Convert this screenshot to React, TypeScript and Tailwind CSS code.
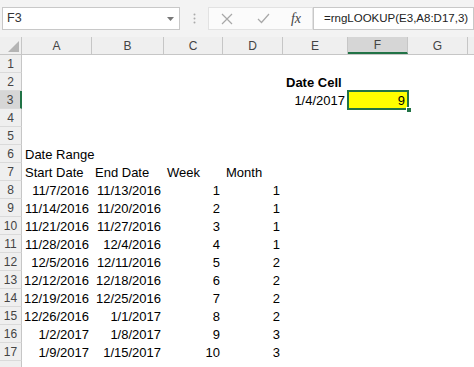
import React from "react";

type Cell = { t: string; a?: "l" | "r"; b?: boolean };

const COLS = [
  { k: "A", w: "w-[70px]" },
  { k: "B", w: "w-[72px]" },
  { k: "C", w: "w-[59px]" },
  { k: "D", w: "w-[60px]" },
  { k: "E", w: "w-[65px]" },
  { k: "F", w: "w-[60px]" },
  { k: "G", w: "w-[60px]" },
];

const data: Record<number, Record<string, Cell>> = {
  2: { E: { t: "Date Cell", a: "l", b: true } },
  3: { E: { t: "1/4/2017", a: "r" }, F: { t: "9", a: "r" } },
  6: { A: { t: "Date Range", a: "l" } },
  7: {
    A: { t: "Start Date", a: "l" },
    B: { t: "End Date", a: "l" },
    C: { t: "Week", a: "l" },
    D: { t: "Month", a: "l" },
  },
};

const rowsData: [string, string, string, string][] = [
  ["11/7/2016", "11/13/2016", "1", "1"],
  ["11/14/2016", "11/20/2016", "2", "1"],
  ["11/21/2016", "11/27/2016", "3", "1"],
  ["11/28/2016", "12/4/2016", "4", "1"],
  ["12/5/2016", "12/11/2016", "5", "2"],
  ["12/12/2016", "12/18/2016", "6", "2"],
  ["12/19/2016", "12/25/2016", "7", "2"],
  ["12/26/2016", "1/1/2017", "8", "2"],
  ["1/2/2017", "1/8/2017", "9", "3"],
  ["1/9/2017", "1/15/2017", "10", "3"],
];
rowsData.forEach((r, i) => {
  data[8 + i] = {
    A: { t: r[0], a: "r" },
    B: { t: r[1], a: "r" },
    C: { t: r[2], a: "r" },
    D: { t: r[3], a: "r" },
  };
});

function Row({ n }: { n: number }) {
  const sel = n === 3;
  return (
    <div className="flex h-[18px] shrink-0">
      <div
        className={
          "w-[22px] shrink-0 h-[18px] flex items-center justify-center text-[12px] text-[#444] border-b border-[#dadada] " +
          (sel
            ? "bg-[#d6d6d6] border-r-2 border-r-[#217346]"
            : "bg-[#efefef] border-r border-r-[#c6c6c6]")
        }
      >
        {n <= 17 ? n : ""}
      </div>
      {COLS.map((c) => {
        const cell = data[n]?.[c.k];
        const isSel = sel && c.k === "F";
        return (
          <div
            key={c.k}
            className={
              c.w +
              " shrink-0 h-[18px] whitespace-nowrap text-[13px] leading-[18px] pt-[1px] text-black " +
              (cell?.a === "r" ? "text-right pr-[3px] " : "pl-[3px] ") +
              (cell?.b ? "font-bold " : "") +
              (isSel ? "relative bg-[#ffff00]" : "")
            }
          >
            {cell?.t}
            {isSel && (
              <>
                <div className="absolute left-[-1px] top-[-1px] right-[-1px] bottom-[-1px] border-2 border-[#217346]" />
                <div className="absolute right-[-4px] bottom-[-4px] w-[6px] h-[6px] bg-[#217346] border border-white" />
              </>
            )}
          </div>
        );
      })}
      <div className="flex-1" />
    </div>
  );
}

export default function App() {
  return (
    <div className="w-[474px] h-[367px] overflow-hidden bg-white flex flex-col font-['Liberation_Sans',Arial,sans-serif]">
      {/* Formula bar */}
      <div className="h-[37px] shrink-0 bg-[#f3f3f3] flex items-center">
        <div className="ml-[2px] w-[178px] h-[23px] bg-white border border-[#c8c8c8] flex items-center justify-between pl-[4px] pr-[5px]">
          <span className="text-[12.5px] text-[#333]">F3</span>
          <svg width="7" height="4" viewBox="0 0 7 4">
            <polygon points="0,0 7,0 3.5,4" fill="#777" />
          </svg>
        </div>
        <div className="w-[28px] flex justify-center">
          <svg width="3" height="11" viewBox="0 0 3 11">
            <circle cx="1.5" cy="1.5" r="1" fill="#aaa" />
            <circle cx="1.5" cy="5.5" r="1" fill="#aaa" />
            <circle cx="1.5" cy="9.5" r="1" fill="#aaa" />
          </svg>
        </div>
        <div className="h-[23px] w-[105px] flex items-center bg-[#fbfbfb] border border-[#e2e2e2]">
          <div className="w-[36px] flex justify-center">
            <svg width="12" height="12" viewBox="0 0 12 12">
              <path d="M1 1 L11 11 M11 1 L1 11" stroke="#a8a8a8" strokeWidth="1.2" />
            </svg>
          </div>
          <div className="w-[36px] flex justify-center">
            <svg width="13" height="11" viewBox="0 0 13 11">
              <path d="M1 6 L4.5 9.5 L12 1" stroke="#a8a8a8" strokeWidth="1.2" fill="none" />
            </svg>
          </div>
          <div className="w-[30px] flex justify-center">
            <span className="font-['Liberation_Serif',serif] italic text-[14px] text-[#444]">fx</span>
          </div>
        </div>
        <div className="flex-1 h-[23px] bg-white border border-[#c8c8c8] flex items-center pl-[10px]">
          <span className="text-[11.5px] text-[#222] whitespace-nowrap">
            =rngLOOKUP(E3,A8:D17,3)
          </span>
        </div>
      </div>
      {/* Column headers */}
      <div className="flex h-[18px] shrink-0 bg-[#efefef] border-b border-[#c6c6c6]">
        <div className="w-[22px] shrink-0 border-r border-[#c6c6c6] flex items-end justify-end pr-[2px] pb-[2px]">
          <svg width="11" height="11" viewBox="0 0 11 11">
            <polygon points="11,0 11,11 0,11" fill="#b4b4b4" />
          </svg>
        </div>
        {COLS.map((c) => (
          <div
            key={c.k}
            className={
              c.w +
              " shrink-0 flex items-center justify-center text-[12px] text-[#444] border-r border-[#c6c6c6] " +
              (c.k === "F" ? "bg-[#d6d6d6] border-b-2 border-b-[#217346]" : "")
            }
          >
            {c.k}
          </div>
        ))}
        <div className="flex-1" />
      </div>
      {Array.from({ length: 18 }, (_, i) => (
        <Row key={i} n={i + 1} />
      ))}
    </div>
  );
}
